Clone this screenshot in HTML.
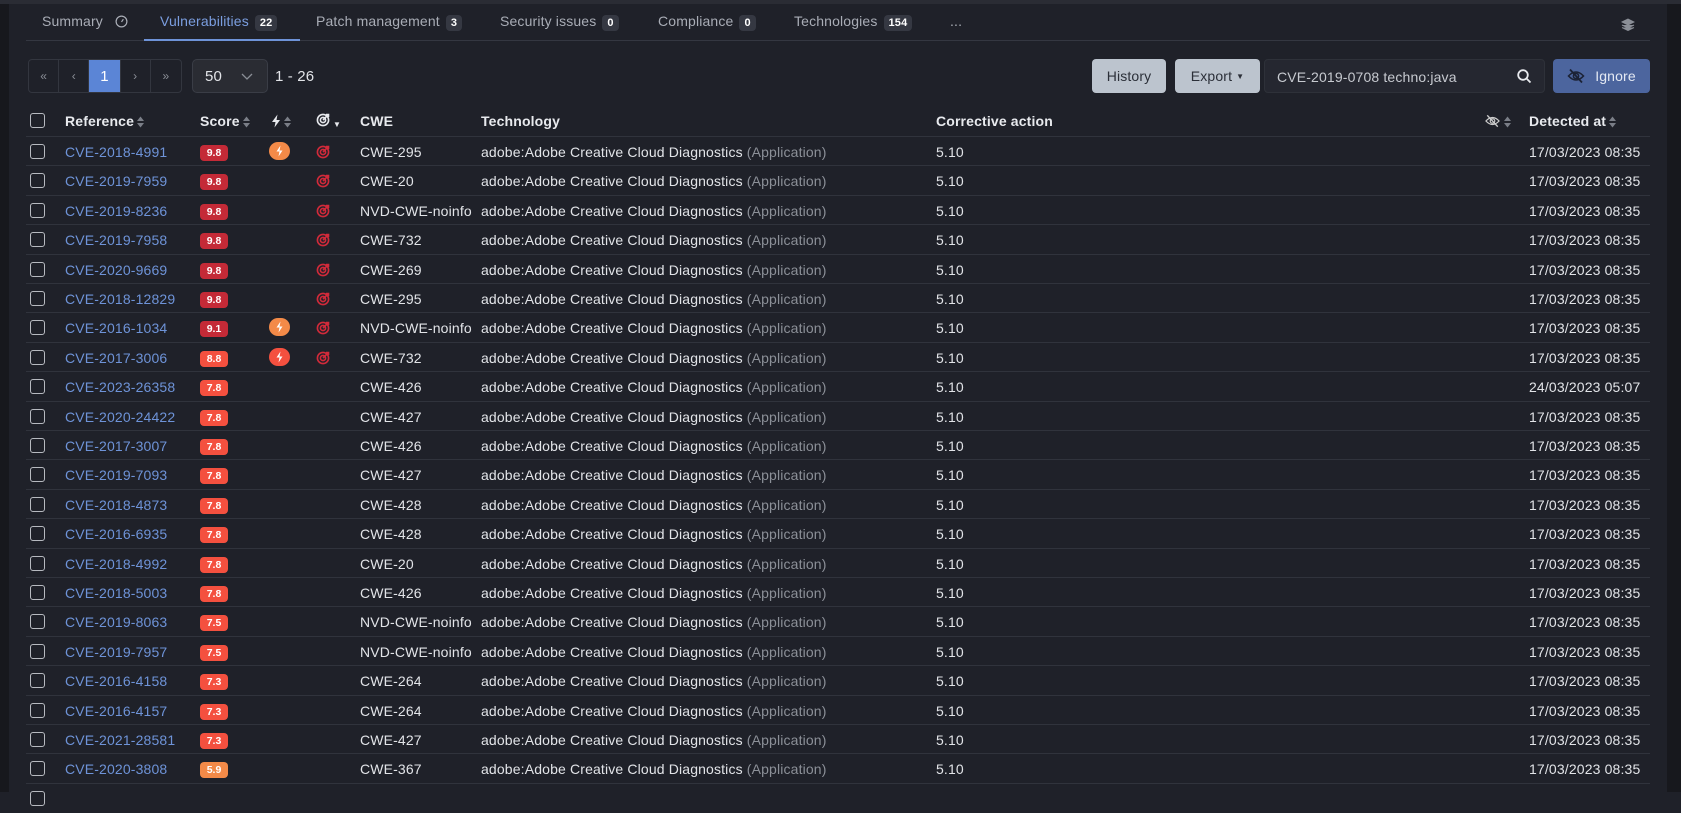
<!DOCTYPE html>
<html><head><meta charset="utf-8">
<style>
*{box-sizing:border-box;margin:0;padding:0}
body{width:1681px;height:792px;overflow:hidden;background:#1f2129;font-family:"Liberation Sans",sans-serif;color:#e2e4e8;font-size:14px;position:relative;letter-spacing:0.15px}
.topband{position:absolute;left:0;top:0;width:1681px;height:4px;background:#2a2c34}
.lstrip{position:absolute;left:0;top:4px;width:9px;height:788px;background:#17181d}
.rstrip{position:absolute;left:1667px;top:4px;width:14px;height:788px;background:#17181d}
.tabs{position:absolute;left:26px;top:4px;width:1624px;height:37px;border-bottom:1px solid #343741}
.tab{position:absolute;top:9px;color:#a9adb6;font-size:14px}
.cnt{display:inline-block;background:#353842;color:#fff;font-size:11px;font-weight:bold;border-radius:4px;padding:2px 5px;margin-left:6px}
.active{color:#7b9ee0}
.uline{position:absolute;left:144px;top:39px;width:156px;height:2px;background:#6e93d8}
.pag{position:absolute;left:28px;top:59px;height:34px;width:154px;border:1px solid #33363f;border-radius:4px;display:flex;color:#8a8e96;font-size:12px}
.pag div{width:31px;border-right:1px solid #33363f;display:flex;align-items:center;justify-content:center}
.pag div:last-child{border:none}
.pag .on{background:#5b85d6;color:#fff;font-size:15px;width:32px}
.sel{position:absolute;left:192px;top:59px;width:76px;height:34px;border:1px solid #3a3d46;border-radius:5px;background:#2a2c33;font-size:15px;padding:8px 0 0 12px}
.range{position:absolute;left:275px;top:68px;font-size:15px}
.btn{position:absolute;top:59px;height:34px;border-radius:4px;background:#bcc4ce;color:#2b2f38;font-size:14px;display:flex;align-items:center;justify-content:center}
.search{position:absolute;left:1264px;top:59px;width:281px;height:34px;border:1px solid #2e3139;border-radius:4px;background:#252730;color:#c7cad0;font-size:14px;padding:9px 0 0 12px}
.ign{position:absolute;left:1553px;top:59px;width:97px;height:34px;border-radius:4px;background:#4c659e;color:#e4e9f3;display:flex;align-items:center;justify-content:center;gap:10px}
.row{position:absolute;left:26px;width:1624px;height:29.4px;border-bottom:1px solid #30333c}
.c{position:absolute;top:7px;white-space:nowrap}
.cb{position:absolute;left:4px;top:7px;width:15px;height:15px;border:1.5px solid #b7bac0;border-radius:3px}
.hd{font-weight:bold;font-size:14px;color:#e8eaee}
.ref{color:#6e93d8}
.bad{position:absolute;left:174px;top:8px;width:28px;height:16px;border-radius:4px;color:#fff;font-size:10.5px;font-weight:bold;text-align:center;line-height:16px;letter-spacing:0}
.dr{background:#c42a37}.r{background:#f4503f}.o{background:#f38a48}
.app{color:#8c9098}
.srt{display:inline-block;vertical-align:middle;margin-left:3px}
</style></head><body>
<div class="topband"></div><div class="lstrip"></div><div class="rstrip"></div>
<div class="tabs">
<span class="tab" style="left:16px">Summary <svg width="13" height="13" viewBox="0 0 14 14" style="vertical-align:-2px;margin-left:8px"><circle cx="7" cy="7" r="5.8" fill="none" stroke="#a9adb6" stroke-width="1.3"/><path d="M7 7.5 L9 4.5" stroke="#a9adb6" stroke-width="1.3"/></svg></span>
<span class="tab active" style="left:134px">Vulnerabilities<span class="cnt">22</span></span>
<span class="tab" style="left:290px">Patch management<span class="cnt">3</span></span>
<span class="tab" style="left:474px">Security issues<span class="cnt">0</span></span>
<span class="tab" style="left:632px">Compliance<span class="cnt">0</span></span>
<span class="tab" style="left:768px">Technologies<span class="cnt">154</span></span>
<span class="tab" style="left:924px">...</span>
<svg style="position:absolute;left:1595px;top:13px" width="14" height="14" viewBox="0 0 14 14"><path d="M1 5 L7 2 L13 5 L7 8Z M1 8 L7 11 L13 8 M1 10.5 L7 13.5 L13 10.5" fill="#8a8e96" stroke="#8a8e96" stroke-width="1"/></svg>
</div>
<div class="uline"></div>
<div class="pag"><div>«</div><div>‹</div><div class="on">1</div><div>›</div><div>»</div></div>
<div class="sel">50<svg style="position:absolute;left:48px;top:13px" width="12" height="8"><path d="M1 1 L6 6 L11 1" stroke="#8a8e96" fill="none" stroke-width="1.3"/></svg></div>
<div class="range">1 - 26</div>
<div class="btn" style="left:1092px;width:74px">History</div>
<div class="btn" style="left:1175px;width:85px">Export <span style="font-size:8px;margin-left:4px">▼</span></div>
<div class="search">CVE-2019-0708 techno:java<svg style="position:absolute;right:12px;top:9px" width="15" height="15" viewBox="0 0 15 15"><circle cx="6" cy="6" r="4.8" stroke="#e8eaee" stroke-width="1.8" fill="none"/><path d="M9.5 9.5 L13.5 13.5" stroke="#e8eaee" stroke-width="1.8"/></svg></div>
<div class="ign"><svg width="18" height="16" viewBox="0 0 18 16"><path d="M1.5 8 Q9 0 16.5 8 Q9 16 1.5 8Z" fill="none" stroke="#1b2235" stroke-width="1.6"/><circle cx="9" cy="8" r="2.6" fill="none" stroke="#1b2235" stroke-width="1.6"/><path d="M3 1.5 L15 14.5" stroke="#1b2235" stroke-width="1.8"/></svg>Ignore</div>
<div id="tbl"></div>
<script>
const S='<svg class="srt" width="7" height="12" viewBox="0 0 7 12"><path d="M0 5 L3.5 0.5 L7 5Z M0 7 L3.5 11.5 L7 7Z" fill="#7a7e87"/></svg>';
const T='<svg width="14" height="14" viewBox="0 0 14 14"><circle cx="7" cy="7" r="5.6" fill="none" stroke="#d22a3a" stroke-width="1.6"/><circle cx="7" cy="7" r="2.6" fill="none" stroke="#d22a3a" stroke-width="1.6"/><path d="M7 7 L12 2 M10 1.5 L12.5 1.5 L12.5 4" stroke="#d22a3a" stroke-width="1.6" fill="none"/></svg>';
const TH=T.replace(/#d22a3a/g,'#e8eaee');
const B=c=>`<svg width="21" height="18" viewBox="0 0 21 18"><rect width="21" height="18" rx="9" fill="${c}"/><path d="M11.5 3.5 L7.5 9.5 L10.5 9.5 L9.5 14.5 L13.5 8.5 L10.5 8.5Z" fill="#fff"/></svg>`;
let h=`<div class="row hd" style="top:105px;height:32px"><div class="cb" style="top:8px"></div>
<span class="c" style="left:39px;top:8px">Reference${S}</span><span class="c" style="left:174px;top:8px">Score${S}</span>
<span class="c" style="left:245px;top:8px"><svg width="10" height="14" viewBox="0 0 10 14" style="vertical-align:-2px"><path d="M6.5 0.5 L1 8 L4.5 8 L3.5 13.5 L9 6 L5.5 6Z" fill="#e8eaee"/></svg>${S}</span>
<span class="c" style="left:290px;top:8px">${TH}<span style="font-size:8px;margin-left:3px">▼</span></span>
<span class="c" style="left:334px;top:8px">CWE</span><span class="c" style="left:455px;top:8px">Technology</span><span class="c" style="left:910px;top:8px">Corrective action</span>
<span class="c" style="left:1458px;top:8px"><svg width="17" height="14" viewBox="0 0 18 16" style="vertical-align:-2px"><path d="M1.5 8 Q9 0 16.5 8 Q9 16 1.5 8Z" fill="none" stroke="#ccc" stroke-width="1.4"/><circle cx="9" cy="8" r="2.6" fill="none" stroke="#ccc" stroke-width="1.4"/><path d="M3 1.5 L15 14.5" stroke="#ccc" stroke-width="1.6"/></svg>${S}</span>
<span class="c" style="left:1503px;top:8px">Detected at${S}</span></div>`;
const d=[["CVE-2018-4991","9.8","dr","o",1,"CWE-295"],["CVE-2019-7959","9.8","dr","",1,"CWE-20"],["CVE-2019-8236","9.8","dr","",1,"NVD-CWE-noinfo"],["CVE-2019-7958","9.8","dr","",1,"CWE-732"],["CVE-2020-9669","9.8","dr","",1,"CWE-269"],["CVE-2018-12829","9.8","dr","",1,"CWE-295"],["CVE-2016-1034","9.1","dr","o",1,"NVD-CWE-noinfo"],["CVE-2017-3006","8.8","r","r",1,"CWE-732"],["CVE-2023-26358","7.8","r","",0,"CWE-426"],["CVE-2020-24422","7.8","r","",0,"CWE-427"],["CVE-2017-3007","7.8","r","",0,"CWE-426"],["CVE-2019-7093","7.8","r","",0,"CWE-427"],["CVE-2018-4873","7.8","r","",0,"CWE-428"],["CVE-2016-6935","7.8","r","",0,"CWE-428"],["CVE-2018-4992","7.8","r","",0,"CWE-20"],["CVE-2018-5003","7.8","r","",0,"CWE-426"],["CVE-2019-8063","7.5","r","",0,"NVD-CWE-noinfo"],["CVE-2019-7957","7.5","r","",0,"NVD-CWE-noinfo"],["CVE-2016-4158","7.3","r","",0,"CWE-264"],["CVE-2016-4157","7.3","r","",0,"CWE-264"],["CVE-2021-28581","7.3","r","",0,"CWE-427"],["CVE-2020-3808","5.9","o","",0,"CWE-367"]];
d.forEach((r,i)=>{const y=137+i*29.4;
h+=`<div class="row" style="top:${y}px"><div class="cb"></div><span class="c ref" style="left:39px">${r[0]}</span>
<div class="bad ${r[2]}">${r[1]}</div>${r[3]?`<span class="c" style="left:243px;top:5px">${B(r[3]=='o'?'#f38a48':'#f4503f')}</span>`:''}
${r[4]?`<span class="c" style="left:290px;top:8px">${T}</span>`:''}
<span class="c" style="left:334px">${r[5]}</span><span class="c" style="left:455px">adobe:Adobe Creative Cloud Diagnostics <span class="app">(Application)</span></span>
<span class="c" style="left:910px">5.10</span><span class="c" style="left:1503px">${i==8?'24/03/2023 05:07':'17/03/2023 08:35'}</span></div>`;});
h+=`<div class="row" style="top:783.8px;border:none"><div class="cb"></div></div>`;
document.getElementById('tbl').innerHTML=h;
</script>
</body></html>
